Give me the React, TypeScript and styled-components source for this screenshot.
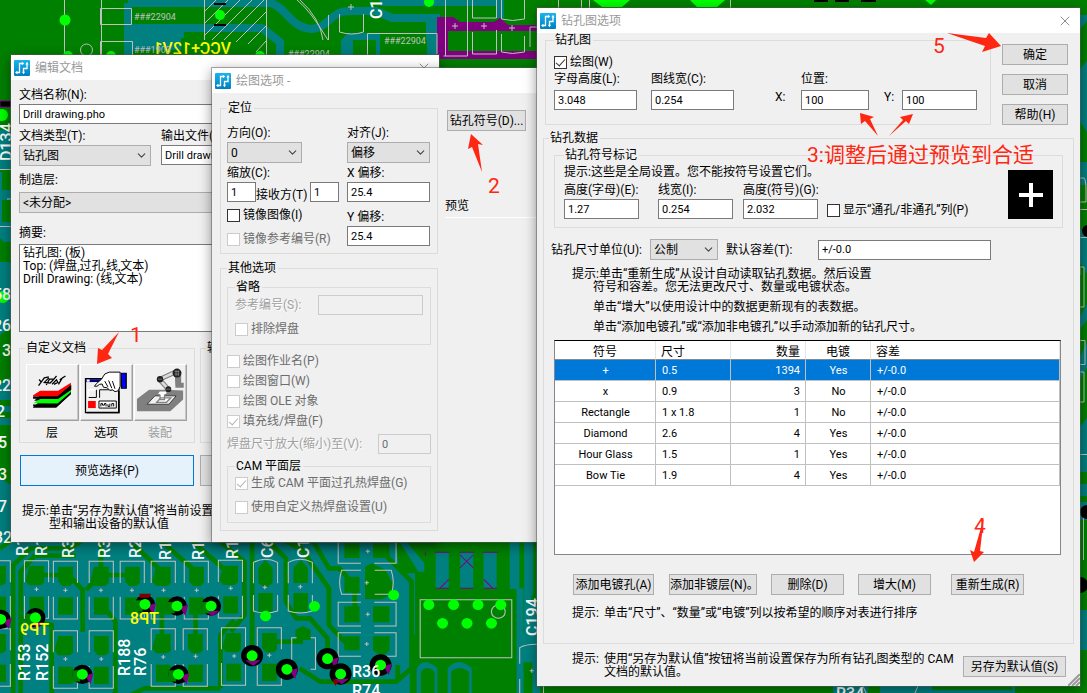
import React from 'react';
import styled, { createGlobalStyle } from 'styled-components';
import { X, ChevronDown } from 'lucide-react';

const GlobalStyle = createGlobalStyle`
  * { box-sizing: border-box; }
  body { margin: 0; background: #008000; }
  body, button, input, select, textarea {
    font-family: Roboto, "Noto Sans CJK SC", sans-serif;
    font-size: 12px;
    line-height: 14px;
    color: #000;
  }
`;

/* ---------- desktop and windows ---------- */

const Desktop = styled.main`
  position: relative;
  min-height: 100vh;
  overflow: hidden;
`;

const BoardSvg = styled.svg`
  position: absolute;
  inset: 0;
  width: 100%;
  height: 100%;
`;

const Notes = styled.svg`
  position: absolute;
  top: 0;
  left: 0;
  width: 1087px;
  height: 693px;
  pointer-events: none;
  fill: #fe2712;
  font-size: 21px;
`;

const Window = styled.section<{ $x: number; $y: number; $w: number; $h: number }>`
  position: absolute;
  left: ${(p) => p.$x}px;
  top: ${(p) => p.$y}px;
  width: ${(p) => p.$w}px;
  min-height: ${(p) => p.$h}px;
  background: #f0f0f0;
  box-shadow: 0 0 0 1px rgba(90, 90, 90, 0.5), 0 3px 12px rgba(0, 0, 0, 0.45);
  white-space: nowrap;
`;

const TitleBar = styled.header`
  display: flex;
  align-items: center;
  gap: 5px;
  height: 25px;
  padding: 0 7px 0 3px;
  background: #fff;
`;

const Title = styled.h1`
  flex: 1;
  margin: 0;
  font-size: 12px;
  font-weight: 400;
  line-height: 24px;
  color: #999;
`;

const CloseButton = styled.button`
  display: flex;
  padding: 0;
  border: 0;
  background: none;
  color: #8c8c8c;
`;

/* ---------- controls ---------- */

const Group = styled.fieldset<{ $m?: string; $p?: string }>`
  min-width: 0;
  margin: ${(p) => p.$m ?? '0'};
  padding: ${(p) => p.$p ?? '0'};
  border: 1px solid #dcdcdc;
`;

const Legend = styled.legend<{ $inset?: boolean }>`
  margin-left: ${(p) => (p.$inset ? 5 : 0)}px;
  padding: 0 2px 0 1px;
  line-height: 14px;
`;

const Input = styled.input<{ $w?: number }>`
  display: block;
  width: ${(p) => (p.$w ? `${p.$w}px` : '100%')};
  height: 20px;
  padding: 0 3px;
  border: 1px solid #7a7a7a;
  border-radius: 0;
  background: #fff;
  font-size: 11px;
  &:disabled {
    border-color: #ccc;
    background: #f0f0f0;
    color: #6d6d6d;
  }
`;

const SelectBox = styled.span<{ $w?: number }>`
  position: relative;
  display: block;
  width: ${(p) => (p.$w ? `${p.$w}px` : '100%')};
  height: 21px;
  svg {
    position: absolute;
    right: 3px;
    top: 4px;
    color: #444;
    pointer-events: none;
  }
`;

const NativeSelect = styled.select`
  display: block;
  width: 100%;
  height: 21px;
  padding: 0 3px;
  appearance: none;
  border: 1px solid #adadad;
  border-radius: 0;
  background: #e1e1e1;
`;

const Button = styled.button<{ $w?: number; $h?: number; $focus?: boolean }>`
  width: ${(p) => (p.$w ? `${p.$w}px` : 'auto')};
  height: ${(p) => p.$h ?? 21}px;
  padding: 0;
  border: 1px solid ${(p) => (p.$focus ? '#0078d7' : '#adadad')};
  background: ${(p) => (p.$focus ? '#e5f1fb' : '#e1e1e1')};
  white-space: nowrap;
`;

const CheckLabel = styled.label<{ $off?: boolean }>`
  display: flex;
  align-items: center;
  gap: 3px;
  height: 14px;
  color: ${(p) => (p.$off ? '#6d6d6d' : '#000')};
`;

const CheckInput = styled.input`
  position: relative;
  flex: none;
  width: 13px;
  height: 13px;
  margin: 0;
  appearance: none;
  border: 1px solid #333;
  background: #fff;
  color: #333;
  &:disabled {
    border-color: #ccc;
    color: #b4b4b4;
  }
  &:checked::after {
    content: '';
    position: absolute;
    left: 3px;
    top: 0;
    width: 4px;
    height: 8px;
    border: solid currentColor;
    border-width: 0 1px 1px 0;
    transform: rotate(42deg);
  }
`;

const FieldBox = styled.div<{ $w?: number; $gap?: number }>`
  display: flex;
  flex-direction: column;
  gap: ${(p) => p.$gap ?? 2}px;
  width: ${(p) => (p.$w ? `${p.$w}px` : 'auto')};
`;

const Label = styled.label<{ $off?: boolean }>`
  line-height: 14px;
  color: ${(p) => (p.$off ? '#a0a0a0' : 'inherit')};
  text-shadow: ${(p) => (p.$off ? '1px 1px 0 #fff' : 'none')};
`;

const Hint = styled.p<{ $m?: string; $hang?: number }>`
  margin: ${(p) => p.$m ?? '0'};
  padding-left: ${(p) => p.$hang ?? 0}px;
  text-indent: -${(p) => p.$hang ?? 0}px;
  line-height: 13px;
`;

const Row = styled.div<{ $gap?: number; $m?: string }>`
  display: flex;
  align-items: center;
  gap: ${(p) => p.$gap ?? 0}px;
  margin: ${(p) => p.$m ?? '0'};
`;

const Stack = styled.div<{ $gap?: number; $m?: string }>`
  display: flex;
  flex-direction: column;
  gap: ${(p) => p.$gap ?? 0}px;
  margin: ${(p) => p.$m ?? '0'};
`;

const Logo = () => (
  <svg width="16" height="16" viewBox="0 0 16 16" aria-hidden="true">
    <defs>
      <linearGradient id="logo" x1="0" y1="0" x2="0" y2="1">
        <stop offset="0" stopColor="#19b4f0" />
        <stop offset="1" stopColor="#0080bd" />
      </linearGradient>
    </defs>
    <rect width="16" height="16" rx="1" fill="url(#logo)" />
    <path d="M2 12.500H5.500V3.500H8.500M9.500 12.500V8.500H13V4" fill="none" stroke="#fff" strokeWidth="1.300" />
    <path d="M1 12.500l2.400-1.700v3.400zM10.300 3.500L7.900 1.800v3.400zM13 1.800l1.600 2.600h-3.200zM9.500 14.200l1.600-2.400h-3.200z" fill="#fff" />
  </svg>
);

type SelectProps = { id: string; value: string; w?: number };
const Select = ({ id, value, w }: SelectProps) => (
  <SelectBox $w={w}>
    <NativeSelect id={id} defaultValue={value}>
      <option>{value}</option>
    </NativeSelect>
    <ChevronDown size={13} strokeWidth={2} />
  </SelectBox>
);

type FieldProps = { id: string; label: string; value: string; w?: number; gap?: number };
const Field = ({ id, label, value, w, gap }: FieldProps) => (
  <FieldBox $w={w} $gap={gap}>
    <Label htmlFor={id}>{label}</Label>
    <Input id={id} defaultValue={value} />
  </FieldBox>
);

type CheckProps = { label: string; checked?: boolean; off?: boolean };
const Check = ({ label, checked, off }: CheckProps) => (
  <CheckLabel $off={off}>
    <CheckInput type="checkbox" defaultChecked={checked} disabled={off} />
    {label}
  </CheckLabel>
);

/* ---------- circuit board behind the windows ---------- */

const verticalParts = [
  [-40, 77], [71, 77], [155, 79], [259, 79], [349, 79], [439, 79], [535, 79], [634, 76],
  [-40, 281], [155, 287], [259, 287], [439, 281], [532, 281], [643, 278], [747, 278],
];
const horizontalParts = [14, 202, 293];
const vias = [
  [2, 253], [103, 248], [421, 208], [514, 213], [613, 213], [239, 418], [518, 418],
  [732, 362], [833, 403], [951, 371], [989, 417], [1105, 390],
];
const plainVias = [
  [771, 243], [913, 214], [1143, 180], [1245, 209], [1317, 209], [1388, 209], [1454, 209],
  [1285, 265], [1356, 265], [1427, 265],
];
const crosses = [
  [106, 163], [190, 166], [293, 166], [383, 166], [475, 166], [571, 166], [670, 160],
  [769, 157], [872, 155], [1068, 49], [1065, 143], [1068, 238], [1065, 327], [190, 372],
  [294, 372], [474, 366], [568, 364], [680, 363], [782, 361], [1544, 407],
];
const silkUp: [number, number, string][] = [
  [28, 556, 'R154'], [47, 556, 'R155'], [74, 558, 'R30'], [110, 558, 'R31'], [141, 558, 'R27'],
  [171, 560, 'R10'], [204, 560, 'R12'], [238, 559, 'R14'], [273, 558, 'C63'], [309, 558, 'C16'],
  [30, 681, 'R153'], [48, 681, 'R152'], [130, 676, 'R188'], [146, 676, 'R76'], [538, 636, 'C194'],
  [275, 712, 'R2'], [382, 19, 'C12'], [12, 161, 'D134'],
];
const silkFlat: [number, number, string][] = [
  [352, 677, 'R36'], [352, 696, 'R74'], [-7, 300, '58'], [-7, 331, '26'], [-7, 356, '13'],
  [-7, 391, '22'], [-4, 417, '2'], [-2, 448, '5'], [-2, 480, '3'], [-2, 512, '7'], [-6, 543, '32'],
  [836, 699, 'R34'],
];

const Board = () => (
  <BoardSvg viewBox="0 0 1087 693" preserveAspectRatio="xMinYMin slice" aria-hidden="true">
    <rect width="1087" height="693" fill="#008000" />
    {/* upper strip */}
    <g fill="none" stroke="#008080" strokeWidth="8" strokeLinejoin="round">
      <path d="M128 3H270C286 6 290 28 312 29C330 27 330 11 350 11H376L392 18H440" />
      <path d="M128 28H262L280 42V60M128 3V60M345 60V42L350 37H380M380 2H500V18M430 18V40" />
    </g>
    <path fill="#008080" d="M130 26H262V30H184V38H181V50H130zM344 36h36v20h-36zM427 18h11v38h-11z" />
    <path fill="#008000" d="M353 40h23v16h-23z" />
    <path fill="#800080" d="M437 17h16l7 5h34l6-4 8 7h29v6h-89v20h89v8H437z" />
    <g fill="none" stroke="#c0c0c0">
      <path d="M64.500 0V56M101.500 0V56M100.500 8.500h31v16h-31zM100.500 56V41.500h32V56M204.500 0V40M266.500 0V56" />
      <path d="M204 12L216 0M204 24L228 0M204 36L240 0M212 40L252 0M224 40L264 0M236 42L266 12M248 44L266 26M256 52L266 41" />
      <path d="M300 0Q320 18 323 40M297 0Q310 10 328 40M328.500 15V40M339.500 14V32Q352 36 363.500 32V14M367.500 56V33.500H437V54" />
      <path d="M445.500 0V56M467.500 0V56h-24M472.500 0V18h24V0M501.500 0V19Q512 22 524.500 19V0M472.500 32V54h24V30M501.500 34V52Q512 55 524.500 52V36M537 27h-7v20" />
      <circle cx="86.500" cy="50" r="6" />
      <path d="M351 4v6M348 7h6M455 23v6M452 26h6M484 23v6M481 26h6M512 25v6M509 28h6" />
    </g>
    <g fill="#0f0">
      <circle cx="65" cy="20" r="5.500" /><circle cx="220" cy="15" r="5" /><circle cx="429" cy="2" r="5" />
      <circle cx="68" cy="56" r="5" /><circle cx="111" cy="56" r="5" /><circle cx="260" cy="56" r="5" />
      <path d="M593 0h37l-8 7h-20zM690 0h35l-8 7h-20zM925 0h11l-5 5z" />
    </g>
    <path d="M214 4h12M214 25h12M814 1h14M835 1h14M861 1h15" stroke="#000" strokeWidth="2" />
    <path d="M558.500 0V8M581.500 0V8M589.500 0V8M730.500 0V8" stroke="#c0c0c0" />
    {/* left edge */}
    <path fill="#008080" d="M0 130h11v40H0zM0 172h11v70H0zM0 262h11v280H0z" />
    <path d="M2 172h9v18H2zM2 200h9v22H2zM0 238l11 12v14L0 252zM0 335l11-8v50l-11 6zM0 400h11v6H0zM0 412h11v6H0zM0 425h11v60l-11-7z" fill="#008000" />
    <path d="M0 101h11v6H0z" stroke="#800080" />
    <circle cx="2" cy="115" r="6" fill="#0f0" /><circle cx="3" cy="297" r="6" fill="#0f0" />
    <path d="M0 169.500h11M0 226.500h11M7 199h4" stroke="#c0c0c0" />
    {/* right edge */}
    <rect x="1079" y="15" width="8" height="678" fill="#008080" />
    <path d="M1079 30l8-9v40l-8 9zM1079 120l8 12v30h-8zM1079 185h8v45h-8zM1079 260l8 14v30l-8 14zM1079 330l8-10v22l-8 18zM1079 380l8-12v50l-8 10zM1079 472h8v12h-8zM1079 496h8v6h-8zM1079 520h8v90h-8zM1079 650h8v43h-8z" fill="#008000" />
    <path d="M1080 178h4q2 2 2 12v12h-6M1080 209.500h7M1080 237.500h7M1080 275v-8h4v40h-4M1080 340.500h5v24h-5M1080 372h4v30h-4M1080 454.500h7M1083.500 560v-45h4" stroke="#c0c0c0" fill="none" />
    <circle cx="1088" cy="231" r="6" /><circle cx="1087" cy="512" r="7" /><circle cx="1080" cy="585" r="8" />
    {/* below the right window */}
    <path d="M833 686h182v7H833z" fill="#008080" />
    <path d="M868 686h12v7h-12zM932 686h80v4h-80z" fill="#008000" />
    <path d="M543.500 686v7M863 686l3 7M918 686l-3 7" stroke="#c0c0c0" />
    {/* lower area */}
    <g transform="translate(0 535) scale(0.3444 0.3333)">
      <rect y="0" width="1568" height="480" fill="#008080" />
      <g fill="none" stroke="#008000" strokeWidth="14" strokeLinejoin="round">
        <path d="M0 40L40 10M38 480V90L90 40H200L235 20M60 480V110L100 62H220M240 290V165L200 120M250 165L300 110M150 480V270L62 250" />
        <path d="M110 120H210M300 120H390M293 20V100M390 30L490 130M470 20L570 110M560 20L670 120M640 20L710 80V240L670 290M732 20V360M780 20L830 70V200L860 250H900L951 310V370M860 20L955 160V270L1010 330" />
        <path d="M910 20L955 100H985L1030 150V220M640 460H420L380 480M640 460V300L680 255M470 240V300M568 240V300M290 200L335 260V480M800 320H880M870 400L930 440H1150L1195 400V140L1100 40M1155 390V440M830 20L870 40" />
        <path d="M1240 480V410Q1250 395 1262 410V480M1335 480V410Q1345 395 1357 410V480M1410 480V410Q1420 395 1432 410V480M1515 20V300M1550 20V200" />
      </g>
      <path d="M1150 20h330v142h26v220h40v98H1190V300h15V115h-45z" fill="#008000" />
      <path d="M1160 20L1215 110H1232V85L1180 20zM1265 52h38v108h-38zM1336 52h38v108h-38zM1404 52h38v108h-38zM1210 480V400q20-36 60 0v80h-8v-70q-22-22-40 0v70zM1300 480V400q30-36 70 0v80h-8v-70q-30-22-52 0v70zM1500 160h20v320h-20zM1540 20h8v160h-8z" fill="#008080" />
      <g fill="#008000">
        {verticalParts.map(([x, y], i) => (
          <React.Fragment key={i}>
            <path d={`M${x + 14} ${y + 16}h43v50l-10 8h-${i % 2 ? 33 : 22}l-11-14z`} />
            <path d={`M${x + 14} ${y + 108}h43v52h-43z`} />
          </React.Fragment>
        ))}
        <path d="M750 98l20-22 22 22v46l-20 14-22-14zM750 174h42v56h-42zM852 98l22-22 20 22v46h-42zM852 174h42v56h-42zM1000 125h44v48h-44zM1060 95l20-10 40 20 20 40v30l-30 18h-50zM1000 214h44v48h-44zM1083 214h48v48h-48zM1000 304h44v42h-44zM1083 304h48v42l-22 20-26-20zM1000 25h44v44h-44zM1083 25h48v44h-48zM858 285l20-12 24 12v30h-44z" />
      </g>
      <g fill="none" stroke="#c0c0c0" strokeWidth="3">
        {verticalParts.map(([x, y], i) => (
          <path key={i} d={`M${x} ${y + 65}V${y}h70v65M${x} ${y + 106}v67h70v-67`} />
        ))}
        {horizontalParts.map((y) => (
          <path key={y} d={`M1048 ${y}H982v71h66M1087 ${y}h63v71h-63`} />
        ))}
        <path d="M1048 106H992q-12 36 0 72h56M1088 106h48q12 36 0 72h-48" />
        <path d="M736 145V82q35-18 70 0v63M736 180v48q35 12 70 0v-48M837 145V82q35-18 70 0v63M837 180v48q35 12 70 0v-48" />
        <path d="M861 308h-14v95h14M902 308h14v95h-14M1220 194h266v174h-266zM1509 386v-48q18-12 60-10M1509 432v48" />
        <circle cx="1447" cy="230" r="20" />
        {crosses.map(([x, y], i) => (
          <path key={i} d={`M${x - 6} ${y}h12M${x} ${y - 6}v12`} />
        ))}
      </g>
      <path d="M1263 52h42M1334 52h42M1402 52h44M1265 160h38M1336 160h38M1405 160h38M1336 60l38 38M1374 60l-38 38M1303 133l-26 27M1405 133l26 27M1235 50v12" stroke="#800080" strokeWidth="3" fill="none" />
      {vias.map(([x, y], i) => (
        <g key={i}>
          <circle cx={x} cy={y} r={i > 6 ? 32 : 29} fill="#000" />
          <path d={i % 3 === 1 ? `M${x - 20} ${y + 14}h44l-20 17z` : `M${x + 8} ${y + 4}l24-8-8 34z`} fill="#800080" />
          {i < 7 && <path d={`M${x - 29} ${y - 12}h22v34h-22z`} fill="#008000" />}
          <circle cx={x} cy={y} r="16" fill="#0f0" />
        </g>
      ))}
      <path d="M405 176h34l-6 12h-28zM965 432l20 8-12 12z" fill="#800000" />
      {plainVias.map(([x, y], i) => (
        <circle key={i} cx={x} cy={y} r="16" fill="#0f0" />
      ))}
    </g>
    {/* silkscreen lettering */}
    <g fill="#fff" fontFamily="Roboto, sans-serif" fontSize="16" fontWeight="500">
      {silkUp.map(([x, y, t]) => (
        <text key={t} transform={`translate(${x} ${y}) rotate(-90)`}>{t}</text>
      ))}
      {silkFlat.map(([x, y, t]) => (
        <text key={`${t}-${y}`} x={x} y={y}>{t}</text>
      ))}
    </g>
    <g fill="#ff0" fontFamily="Roboto, sans-serif" fontSize="16" fontWeight="500">
      <text transform="translate(231 54) scale(-1 1)">VCC+12V1</text>
      <text transform="translate(159 624) scale(-1 1)">TP8</text>
      <text transform="translate(49 635) scale(-1 1)">TP9</text>
    </g>
    <g fill="#c0c0c0" fontFamily="Roboto, sans-serif" fontSize="9">
      <text x="134" y="20">###22904</text>
      <text x="134" y="53">###1903</text>
      <text x="384" y="44">###22904</text>
      <text x="288" y="57">###22904</text>
    </g>
  </BoardSvg>
);

/* ---------- "edit document" window ---------- */

const EditBody = styled.div`
  padding: 8px 8px 0;
`;

const TwoFields = styled.div`
  display: grid;
  grid-template-columns: 132px 1fr;
  column-gap: 10px;
  margin-top: 5px;
`;

const Summary = styled.textarea`
  display: block;
  width: 100%;
  height: 88px;
  padding: 2px 3px;
  border: 1px solid #7a7a7a;
  resize: none;
  line-height: 13px;
`;

const TwoGroups = styled.div`
  display: grid;
  grid-template-columns: 176px 1fr;
  column-gap: 5px;
  margin-top: 9px;
`;

const Tools = styled.div`
  display: grid;
  grid-template-columns: repeat(3, 54px);
  padding: 9px 5px 2px;
`;

const Tool = styled.button<{ $off?: boolean }>`
  display: flex;
  flex-direction: column;
  align-items: center;
  gap: 5px;
  padding: 0;
  border: 0;
  background: none;
  color: ${(p) => (p.$off ? '#a0a0a0' : '#000')};
  svg {
    width: 53px;
    height: 57px;
    border: 1px solid;
    border-color: #fff #a0a0a0 #a0a0a0 #fff;
    box-shadow: inset -1px -1px #c8c8c8;
  }
`;

const LayersIcon = () => (
  <svg viewBox="78 134 159 171">
    <path d="M97 265l22-18 60-4 36-34v14l-46 44H97z" fill="#000" />
    <path d="M100 245l18-16 58-3 40-30v15l-40 33z" fill="#000" />
    <path d="M97 253l22-13h56l40-28v6l-42 36z" fill="#0f0" />
    <path d="M97 228l22-14h56l40-25v7l-42 36H97z" fill="#f00" />
    <path d="M97 232h76l42-36v6l-42 37H97zM97 257h76l42-37v5l-42 37H97z" fill="#000" />
    <path d="M114 198l18-24 14-3M122 187l-6-8M138 196l10-18h14M146 174l-14 14 18 2 12-12 8-10M156 194l14-14 4 8-12 6M176 194l12-20 10-6M180 180l12-8" stroke="#000" strokeWidth="4" fill="none" />
  </svg>
);

const OptionsIcon = () => (
  <svg viewBox="240 134 159 171">
    <path d="M254 176h104v106H254z" fill="#f0f0f0" stroke="#000" strokeWidth="4" />
    <path d="M256 178h50v9h-50z" fill="#00007b" />
    <path d="M258 179h9v7h-9z" fill="#fff" />
    <path d="M358 214v68H258" stroke="#000" strokeWidth="5" fill="none" />
    <path d="M262 233V211h26" stroke="#fff" strokeWidth="4" fill="none" />
    <path d="M264 235h24v-24M298 236v-25h48" stroke="#000" strokeWidth="3" fill="none" />
    <path d="M262 246h24v22h-24z" fill="#f00" />
    <path d="M296 246h54v22h-54z" fill="#fff" stroke="#000" strokeWidth="3" />
    <path d="M302 263v-9h5v5h6v-5h5v9M324 256v7h6v-9M336 263v-9h6v9" stroke="#000" strokeWidth="3" fill="none" />
    <path d="M282 200l6-8 16-14 10-16 14-6h34v44l-6 14-10 3-8-6-8 2-8-8-12-2-4-10-8 1-8 6z" fill="#fff" stroke="#000" strokeWidth="3" />
    <path d="M314 184l10 18M326 182l10 24M338 184l8 24" stroke="#000" strokeWidth="3" fill="none" />
    <path d="M364 158h19v50h-19z" fill="#000" />
    <path d="M366 160h13v46h-10z" fill="#00f" />
  </svg>
);

const AssemblyIcon = () => (
  <svg viewBox="402 134 159 171">
    <path d="M408 240l38-29h50l56 2v28l-40 37H408z" fill="#808080" />
    <path d="M440 256l24-26h66l-22 26z" fill="#f0f0f0" stroke="#000" strokeWidth="2" />
    <path d="M470 250l12-14h32l-14 14zM478 214h24v10l-8 4v14h-14v-14l-8-4z" fill="#fff" stroke="#808080" strokeWidth="4" />
    <path d="M480 178l52-24M480 180l26 30" stroke="#808080" strokeWidth="15" />
    <path d="M480 178l52-24M480 180l26 30" stroke="#dcdcdc" strokeWidth="8" />
    <path d="M526 165h20v24h8v16h-26z" fill="#808080" />
    <circle cx="533" cy="159" r="14" fill="#222" /><circle cx="480" cy="178" r="10" fill="#222" />
    <circle cx="506" cy="209" r="9" fill="#222" />
    <path d="M526 154h14M526 162h14M530 150v18M537 150v18M474 178h12M500 209h12" stroke="#999" strokeWidth="2" />
  </svg>
);

const EditWindow = () => (
  <Window $x={11} $y={55} $w={428} $h={487}>
    <TitleBar>
      <Logo />
      <Title>编辑文档</Title>
      <CloseButton aria-label="关闭"><X size={16} strokeWidth={1.5} /></CloseButton>
    </TitleBar>
    <EditBody>
      <Field id="name" label="文档名称(N):" value="Drill drawing.pho" />
      <TwoFields>
        <FieldBox>
          <Label htmlFor="type">文档类型(T):</Label>
          <Select id="type" value="钻孔图" />
        </FieldBox>
        <Field id="out" label="输出文件(F):" value="Drill drawing.pho" />
      </TwoFields>
      <Stack $gap={5} $m="7px 0 0">
        <Label htmlFor="layer">制造层:</Label>
        <Select id="layer" value="<未分配>" />
      </Stack>
      <Stack $gap={4} $m="13px 0 0">
        <Label htmlFor="summary">摘要:</Label>
        <Summary id="summary" defaultValue={'钻孔图: (板)\nTop: (焊盘,过孔,线,文本)\nDrill Drawing: (线,文本)'} />
      </Stack>
      <TwoGroups>
        <Group>
          <Legend $inset>自定义文档</Legend>
          <Tools>
            <Tool><LayersIcon />层</Tool>
            <Tool><OptionsIcon />选项</Tool>
            <Tool $off><AssemblyIcon />装配</Tool>
          </Tools>
        </Group>
        <Group>
          <Legend $inset>输出</Legend>
        </Group>
      </TwoGroups>
      <Row $gap={6} $m="12px 1px 0">
        <Button $w={174} $h={31} $focus>预览选择(P)</Button>
        <Button $w={174} $h={31} aria-label="运行" />
      </Row>
      <Hint $hang={27} $m="19px 0 0 3px">
        提示:单击“另存为默认值”将当前设置
        <br />
        型和输出设备的默认值
      </Hint>
    </EditBody>
  </Window>
);

/* ---------- "plot options" window ---------- */

const PlotBody = styled.div`
  display: grid;
  grid-template-columns: 218px 1fr;
  column-gap: 7px;
  padding: 8px 0 0 8px;
`;

const Placement = styled.div`
  display: grid;
  grid-template-columns: 112px 83px;
  column-gap: 8px;
`;

const Scale = styled.div`
  display: grid;
  grid-template-columns: 29px 1fr 29px;
  align-items: end;
`;

const SpacedRow = styled.div<{ $m?: string }>`
  display: flex;
  justify-content: space-between;
  align-items: center;
  margin: ${(p) => p.$m ?? '0'};
`;

const PreviewPane = styled.div`
  padding-top: 9px;
`;

const PreviewTitle = styled.div`
  margin-top: 68px;
  padding-bottom: 4px;
  border-bottom: 1px solid #fff;
`;

const PlotWindow = () => (
  <Window $x={212} $y={68} $w={400} $h={474}>
    <TitleBar>
      <Logo />
      <Title>绘图选项 -</Title>
    </TitleBar>
    <PlotBody>
      <div>
        <Group $p="11px 6px 7px">
          <Legend>定位</Legend>
          <Placement>
            <Stack>
              <FieldBox>
                <Label htmlFor="dir">方向(O):</Label>
                <Select id="dir" value="0" w={75} />
              </FieldBox>
              <FieldBox>
                <Stack $m="3px 0 0"><Label htmlFor="scale">缩放(C):</Label></Stack>
                <Scale>
                  <Input id="scale" defaultValue="1" />
                  <Label htmlFor="to">接收方(T)</Label>
                  <Input id="to" defaultValue="1" />
                </Scale>
              </FieldBox>
              <Stack $gap={10} $m="6px 0 0">
                <Check label="镜像图像(I)" />
                <Check label="镜像参考编号(R)" off />
              </Stack>
            </Stack>
            <Stack>
              <FieldBox>
                <Label htmlFor="align">对齐(J):</Label>
                <Select id="align" value="偏移" />
              </FieldBox>
              <Stack $gap={8} $m="3px 0 0">
                <Field id="dx" label="X 偏移:" value="25.4" />
                <Field id="dy" label="Y 偏移:" value="25.4" />
              </Stack>
            </Stack>
          </Placement>
        </Group>
        <Group $m="7px 0 0" $p="5px 6px 7px">
          <Legend>其他选项</Legend>
          <Group $p="1px 7px 8px">
            <Legend>省略</Legend>
            <SpacedRow>
              <Label htmlFor="ref" $off>参考编号(S):</Label>
              <Input id="ref" $w={105} disabled />
            </SpacedRow>
            <Stack $m="7px 0 0"><Check label="排除焊盘" off /></Stack>
          </Group>
          <Stack $gap={6} $m="9px 0 0">
            <Check label="绘图作业名(P)" off />
            <Check label="绘图窗口(W)" off />
            <Check label="绘图 OLE 对象" off />
            <Check label="填充线/焊盘(F)" checked off />
          </Stack>
          <SpacedRow $m="6px 0 5px">
            <Label htmlFor="over" $off>焊盘尺寸放大(缩小)至(V):</Label>
            <Input id="over" $w={53} defaultValue="0" disabled />
          </SpacedRow>
          <Group $p="3px 7px 8px">
            <Legend>CAM 平面层</Legend>
            <Stack $gap={10}>
              <Check label="生成 CAM 平面过孔热焊盘(G)" checked off />
              <Check label="使用自定义热焊盘设置(U)" off />
            </Stack>
          </Group>
        </Group>
      </div>
      <PreviewPane>
        <Row $m="0 0 0 2px"><Button $w={79}>钻孔符号(D)...</Button></Row>
        <PreviewTitle>预览</PreviewTitle>
      </PreviewPane>
    </PlotBody>
  </Window>
);

/* ---------- "drill drawing options" window ---------- */

const TopRow = styled.div`
  display: grid;
  grid-template-columns: 1fr 66px;
  column-gap: 11px;
  padding: 0 12px 0 8px;
`;

const Position = styled.div`
  display: grid;
  grid-template-columns: 26px 68px 33px 75px;
  row-gap: 4px;
  margin-left: 41px;
  > :first-child { grid-column: 2 / 5; }
`;

const AxisLabel = styled(Label)<{ $inset?: boolean }>`
  padding-left: ${(p) => (p.$inset ? 15 : 0)}px;
`;

const SymbolRow = styled.div`
  display: flex;
  justify-content: space-between;
  align-items: flex-end;
`;

const SymbolFields = styled.div`
  display: grid;
  grid-template-columns: 94px 85px 84px auto;
  align-items: end;
  margin-top: 4px;
`;

const SymbolPreview = styled.div`
  display: grid;
  place-items: center;
  width: 45px;
  height: 49px;
  background: #000;
`;

const UnitRow = styled.div`
  display: grid;
  grid-template-columns: 99px 76px 92px 173px;
  align-items: center;
  margin: 11px 0 0 7px;
`;

const TableFrame = styled.div`
  height: 215px;
  margin: 6px 12px 0 10px;
  border: 1px solid #828790;
  border-top-color: #000;
  background: #fff;
`;

const Table = styled.table`
  width: 100%;
  table-layout: fixed;
  border-collapse: separate;
  border-spacing: 0;
  font-size: 11px;
  line-height: 14px;
`;

const Th = styled.th<{ $align?: string }>`
  height: 19px;
  padding: 3px 5px 0;
  border-right: 1px solid #e5e5e5;
  border-bottom: 1px solid #828790;
  font-size: 12px;
  font-weight: 400;
  text-align: ${(p) => p.$align ?? 'left'};
`;

const Td = styled.td<{ $align?: string }>`
  height: 21px;
  padding: 2px 5px 0 6px;
  border-right: 1px solid #c0c0c0;
  border-bottom: 1px solid #c0c0c0;
  text-align: ${(p) => p.$align ?? 'left'};
`;

const Tr = styled.tr<{ $selected?: boolean }>`
  background: ${(p) => (p.$selected ? '#0078d7' : '#fff')};
  color: ${(p) => (p.$selected ? '#fff' : '#000')};
`;

const Actions = styled.div`
  display: grid;
  grid-template-columns: 96px 102px 87px 93px 73px;
  margin: 19px 0 12px 29px;
`;

const NoteGrid = styled.div<{ $m: string }>`
  display: grid;
  grid-template-columns: 32px 1fr auto;
  margin: ${(p) => p.$m};
  line-height: 13px;
`;

const Footer = styled.div`
  padding-top: 3px;
`;

const Grip = styled.svg`
  position: absolute;
  right: 0;
  bottom: 0;
`;

const holes = [
  ['+', '0.5', '1394', 'Yes'],
  ['x', '0.9', '3', 'No'],
  ['Rectangle', '1 x 1.8', '1', 'No'],
  ['Diamond', '2.6', '4', 'Yes'],
  ['Hour Glass', '1.5', '1', 'Yes'],
  ['Bow Tie', '1.9', '4', 'Yes'],
];

const DrillWindow = () => (
  <Window $x={537} $y={8} $w={543} $h={678}>
    <TitleBar>
      <Logo />
      <Title>钻孔图选项</Title>
      <CloseButton aria-label="关闭"><X size={16} strokeWidth={1.5} /></CloseButton>
    </TitleBar>
    <TopRow>
      <Group $p="8px 8px 14px">
        <Legend>钻孔图</Legend>
        <Check label="绘图(W)" checked />
        <Row $m="3px 0 0">
          <Row $gap={14}>
            <Field id="letterH" label="字母高度(L):" value="3.048" w={83} gap={4} />
            <Field id="lineW" label="图线宽(C):" value="0.254" w={83} gap={4} />
          </Row>
          <Position>
            <span>位置:</span>
            <AxisLabel htmlFor="px">X:</AxisLabel>
            <Input id="px" defaultValue="100" />
            <AxisLabel htmlFor="py" $inset>Y:</AxisLabel>
            <Input id="py" defaultValue="100" />
          </Position>
        </Row>
      </Group>
      <Stack $gap={9} $m="11px 0 0">
        <Button>确定</Button>
        <Button>取消</Button>
        <Button>帮助(H)</Button>
      </Stack>
    </TopRow>
    <Group $m="6px 6px 0" $p="0 0 23px">
      <Legend $inset>钻孔数据</Legend>
      <Group $m="3px 10px 0" $p="3px 9px 8px">
        <Legend>钻孔符号标记</Legend>
        <SymbolRow>
          <div>
            <Label as="div">提示:这些是全局设置。您不能按符号设置它们。</Label>
            <SymbolFields>
              <Field id="sh" label="高度(字母)(E):" value="1.27" w={75} />
              <Field id="sw" label="线宽(I):" value="0.254" w={75} />
              <Field id="ss" label="高度(符号)(G):" value="2.032" w={75} />
              <Stack $m="0 0 2px"><Check label="显示“通孔/非通孔”列(P)" /></Stack>
            </SymbolFields>
          </div>
          <SymbolPreview>
            <svg width="24" height="24" aria-hidden="true"><path d="M0 12H24M12 0V24" stroke="#fff" strokeWidth="4" /></svg>
          </SymbolPreview>
        </SymbolRow>
      </Group>
      <UnitRow>
        <Label htmlFor="unit">钻孔尺寸单位(U):</Label>
        <Select id="unit" value="公制" w={68} />
        <Label htmlFor="tol">默认容差(T):</Label>
        <Input id="tol" defaultValue="+/-0.0" />
      </UnitRow>
      <Hint $hang={21} $m="8px 0 0 28px">
        提示:单击“重新生成”从设计自动读取钻孔数据。然后设置
        <br />
        符号和容差。您无法更改尺寸、数量或电镀状态。
      </Hint>
      <Hint $m="7px 0 0 49px">单击“增大”以使用设计中的数据更新现有的表数据。</Hint>
      <Hint $m="7px 0 0 49px">单击“添加电镀孔”或“添加非电镀孔”以手动添加新的钻孔尺寸。</Hint>
      <TableFrame>
        <Table>
          <colgroup>
            <col width="101" /><col width="75" /><col width="75" /><col width="65" /><col />
          </colgroup>
          <thead>
            <tr>
              <Th $align="center">符号</Th>
              <Th>尺寸</Th>
              <Th $align="right">数量</Th>
              <Th $align="center">电镀</Th>
              <Th>容差</Th>
            </tr>
          </thead>
          <tbody>
            {holes.map(([symbol, size, count, plated], i) => (
              <Tr key={symbol} $selected={i === 0}>
                <Td $align="center">{symbol}</Td>
                <Td>{size}</Td>
                <Td $align="right">{count}</Td>
                <Td $align="center">{plated}</Td>
                <Td>+/-0.0</Td>
              </Tr>
            ))}
          </tbody>
        </Table>
      </TableFrame>
      <Actions>
        <Button $w={81}>添加电镀孔(A)</Button>
        <Button $w={88}>添加非镀层(N)。</Button>
        <Button $w={73}>删除(D)</Button>
        <Button $w={73}>增大(M)</Button>
        <Button $w={73}>重新生成(R)</Button>
      </Actions>
      <NoteGrid $m="0 0 0 28px">
        <span>提示:</span>
        <span>单击“尺寸”、“数量”或“电镀”列以按希望的顺序对表进行排序</span>
      </NoteGrid>
    </Group>
    <NoteGrid $m="9px 14px 0 35px">
      <span>提示:</span>
      <span>
        使用“另存为默认值”按钮将当前设置保存为所有钻孔图类型的 CAM
        <br />
        文档的默认值。
      </span>
      <Footer><Button $w={103}>另存为默认值(S)</Button></Footer>
    </NoteGrid>
    <Grip width="12" height="12" aria-hidden="true">
      <path d="M0 12L12 0M4 12L12 4M8 12L12 8" stroke="#9a9a9a" strokeWidth="2" />
    </Grip>
  </Window>
);

const Annotations = () => (
  <Notes viewBox="0 0 1087 693">
    <path d="M97 364L98 348L102 350L119 332L108 354L112 358z" />
    <path d="M471 134L468 149L472 147L482 172L478 144L483 145z" />
    <path d="M1001 46L989 33L986 38L947 33L985 46L982 52z" />
    <path d="M860 113L861 124L865 121L878 136L870 119L874 117z" />
    <path d="M913 114L900 117L903 120L889 136L906 121L909 124z" />
    <path d="M974 562L970 550L974 552L984 517L980 551L984 552z" />
    <text x="130" y="342">1</text>
    <text x="488" y="193">2</text>
    <text x="807" y="162">3:调整后通过预览到合适</text>
    <text x="974" y="533">4</text>
    <text x="933" y="53">5</text>
  </Notes>
);

export default function App() {
  return (
    <>
      <GlobalStyle />
      <Desktop>
        <Board />
        <EditWindow />
        <PlotWindow />
        <DrillWindow />
        <Annotations />
      </Desktop>
    </>
  );
}
